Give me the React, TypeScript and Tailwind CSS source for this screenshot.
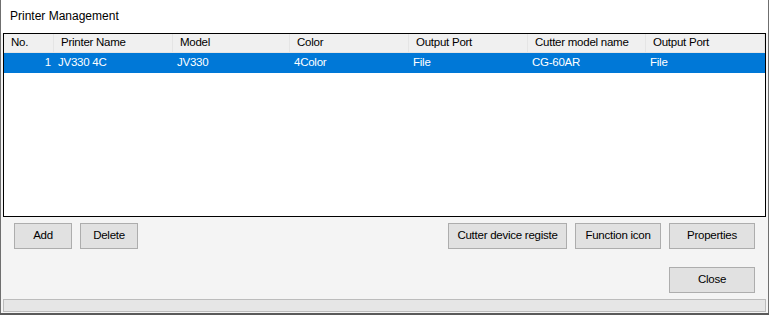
import React from 'react';

const columns = [
  { title: 'No.', width: 50 },
  { title: 'Printer Name', width: 119 },
  { title: 'Model', width: 117 },
  { title: 'Color', width: 119 },
  { title: 'Output Port', width: 119 },
  { title: 'Cutter model name', width: 118 },
  { title: 'Output Port', width: 119 },
];

const rows = [
  { no: '1', name: 'JV330 4C', model: 'JV330', color: '4Color', port: 'File', cutter: 'CG-60AR', cutterPort: 'File' },
];

function WinButton({ label, width }: { label: string; width: string }) {
  return (
    <button
      className={`${width} h-[26px] bg-[#e1e1e1] border border-[#adadad] text-[11.5px] tracking-[-0.25px] text-black flex items-center justify-center`}
    >
      {label}
    </button>
  );
}

export default function App() {
  return (
    <div
      className="w-[769px] h-[315px] bg-[#5a5a5a] overflow-hidden"
      style={{ fontFamily: '"Liberation Sans", Arial, sans-serif' }}
    >
      <div className="w-[769px] h-[313px] flex flex-col border-l border-r border-[#6f6f6f] bg-[#f4f4f4]">
        {/* title */}
        <div className="h-[33px] bg-white pl-[9px] pb-[1px] flex items-center text-[12px] text-black shrink-0">
          Printer Management
        </div>

        {/* list view */}
        <div className="mx-[2px] h-[184px] border border-black bg-white flex flex-col shrink-0">
          <div className="h-[19px] flex bg-[#f0f0f0] border-b border-[#e5e5e5] text-[11.5px] tracking-[-0.25px] text-black">
            {columns.map((c, i) => (
              <div
                key={i}
                className="h-full flex items-center pl-[7px] border-r border-[#e5e5e5]"
                style={{ width: c.width }}
              >
                {c.title}
              </div>
            ))}
            <div className="flex-1" />
          </div>
          {rows.map((r, i) => (
            <div key={i} className="h-[20px] flex items-center bg-[#0078d7] text-white text-[11.5px] tracking-[-0.25px]">
              <div className="w-[50px] text-right pr-[3px]">{r.no}</div>
              <div className="w-[119px] pl-[4px]">{r.name}</div>
              <div className="w-[117px] pl-[4px]">{r.model}</div>
              <div className="w-[119px] pl-[4px]">{r.color}</div>
              <div className="w-[119px] pl-[4px]">{r.port}</div>
              <div className="w-[118px] pl-[4px]">{r.cutter}</div>
              <div className="flex-1 pl-[4px]">{r.cutterPort}</div>
            </div>
          ))}
        </div>

        {/* action buttons */}
        <div className="flex mt-[6px] pl-[13px] pr-[13px] shrink-0">
          <div className="flex gap-[8px]">
            <WinButton label="Add" width="w-[58px]" />
            <WinButton label="Delete" width="w-[58px]" />
          </div>
          <div className="flex gap-[8px] ml-auto">
            <WinButton label="Cutter device registe" width="w-[119px]" />
            <WinButton label="Function icon" width="w-[86px]" />
            <WinButton label="Properties" width="w-[86px]" />
          </div>
        </div>

        <div className="flex justify-end pr-[13px] mt-[18px] shrink-0">
          <WinButton label="Close" width="w-[86px]" />
        </div>

        {/* status bar */}
        <div className="mt-auto mx-[2px] mb-[1px] h-[13px] bg-[#e6e6e6] border border-[#bcbcbc]" />
      </div>
    </div>
  );
}
